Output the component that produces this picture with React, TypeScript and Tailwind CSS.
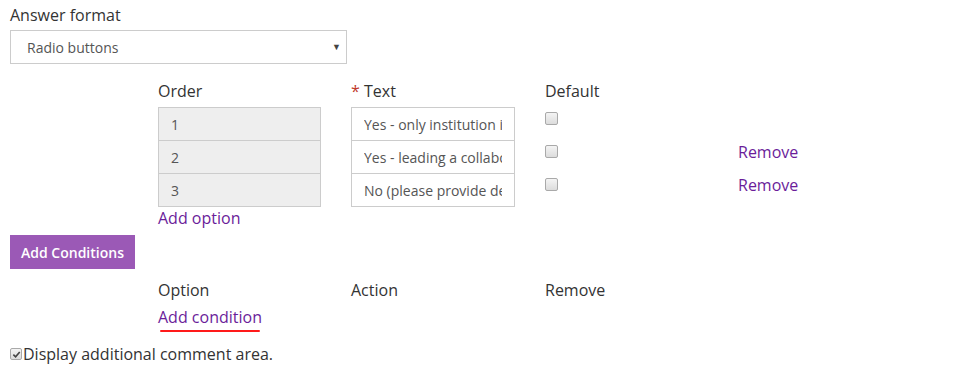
const rows = [
  { order: "1", text: "Yes - only institution involved", removable: false },
  { order: "2", text: "Yes - leading a collaboration", removable: true },
  { order: "3", text: "No (please provide details)", removable: true },
];

const box =
  "m-0 h-[13px] w-[13px] appearance-none rounded-[2px] border border-[#a9a9a9] bg-gradient-to-b from-[#f4f4f4] to-[#dcdcdc]";

export default function App() {
  return (
    <div
      className="min-h-screen bg-white px-[10px] pt-[4px] text-[#333]"
      style={{ fontFamily: '"Open Sans", sans-serif' }}
    >
      <label className="block text-[16px] leading-[22px]">Answer format</label>
      <div className="relative mt-[4px] w-[337px]">
        <select className="h-[34px] w-full appearance-none border border-[#ccc] bg-white pl-[16px] text-[14px] text-[#555] outline-none">
          <option>Radio buttons</option>
        </select>
        <span className="pointer-events-none absolute right-[6px] top-[12px] text-[9px] leading-none text-[#444]">
          ▼
        </span>
      </div>

      <div className="mt-[16px] ml-[148px] grid grid-cols-[193px_194px_193px_auto] text-[16px]">
        <div className="leading-[22px]">Order</div>
        <div className="leading-[22px]">
          <span className="text-[#c0392b]">*</span> Text
        </div>
        <div className="leading-[22px]">Default</div>
        <div />

        {rows.map((r, i) => (
          <Row key={r.order} {...r} first={i === 0} />
        ))}

        <a href="#" className="col-span-4 text-[16px] leading-[22px] text-[#6b1d9a]">
          Add option
        </a>
      </div>

      <button className="mt-[6px] h-[34px] bg-[#9b59b6] px-[11px] text-[14px] font-semibold text-white">
        Add Conditions
      </button>

      <div className="mt-[10px] ml-[148px] grid grid-cols-[193px_194px_193px_auto] text-[16px]">
        <div className="leading-[22px]">Option</div>
        <div className="leading-[22px]">Action</div>
        <div className="leading-[22px]">Remove</div>
        <div />
        <div className="col-span-4 mt-[4px]">
          <a href="#" className="relative inline-block leading-[22px] text-[#6b1d9a]">
            Add condition
            <span className="absolute left-[2px] right-[2px] top-[24px] h-[2px] rounded-full bg-[#ff1a1a]" />
          </a>
        </div>
      </div>

      <label className="mt-[14px] flex items-center text-[16px] leading-[22px]">
        <span className="relative flex h-[12px] w-[12px] items-center justify-center rounded-[2px] border border-[#a9a9a9] bg-gradient-to-b from-[#f4f4f4] to-[#dcdcdc]">
          <svg viewBox="0 0 10 10" className="h-[9px] w-[9px]">
            <path d="M1.5 5.2 L4 7.6 L8.6 2.2" fill="none" stroke="#444" strokeWidth="1.8" />
          </svg>
        </span>
        <span className="ml-[1px]">Display additional comment area.</span>
      </label>
    </div>
  );
}

function Row({ order, text, removable, first }: { order: string; text: string; removable: boolean; first: boolean }) {
  const cell = first ? "mt-[5px]" : "-mt-px";
  return (
    <>
      <div className={cell}>
        <input
          readOnly
          value={order}
          className="h-[34px] w-[163px] border border-[#ccc] bg-[#eee] px-[12px] text-[14px] text-[#555] outline-none"
        />
      </div>
      <div className={cell}>
        <input
          readOnly
          value={text}
          className="h-[34px] w-[164px] border border-[#ccc] bg-white px-[12px] text-[14px] text-[#555] outline-none"
        />
      </div>
      <div className={cell}>
        <input type="checkbox" className={`mt-[3px] ${box}`} />
      </div>
      <div className={cell}>
        {removable && (
          <a href="#" className="mt-[1px] block leading-[22px] text-[#6b1d9a]">
            Remove
          </a>
        )}
      </div>
    </>
  );
}
